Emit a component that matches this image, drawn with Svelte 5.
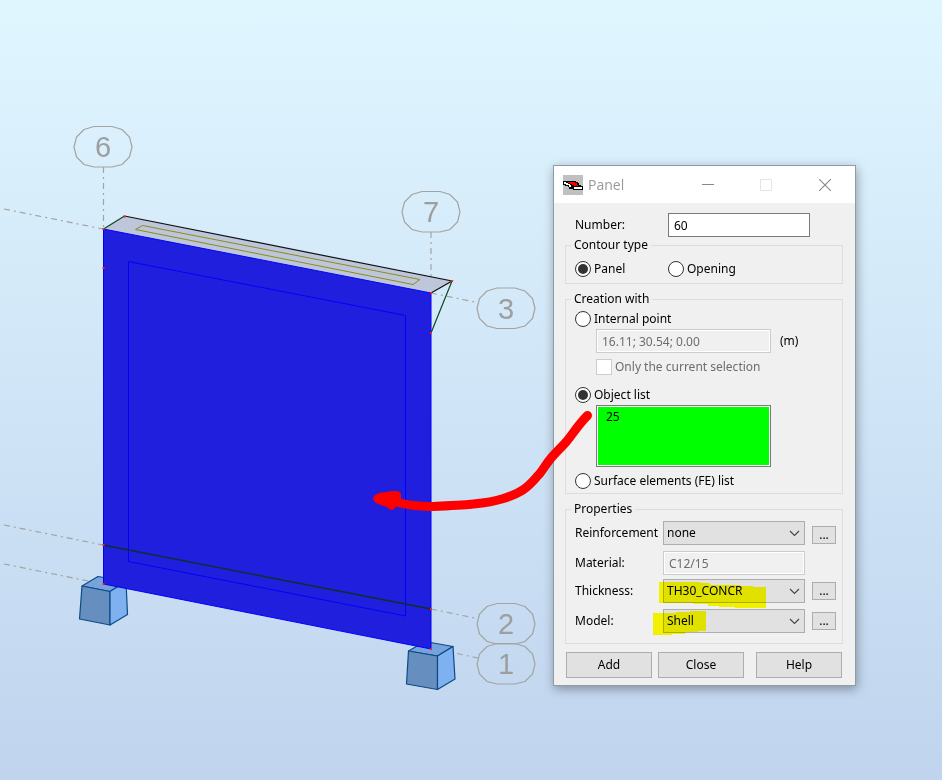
<script>
  const bubbles = [
    { label: '6', x: 103, y: 147 },
    { label: '7', x: 431, y: 212 },
    { label: '3', x: 506, y: 308.5 },
    { label: '2', x: 506, y: 624 },
    { label: '1', x: 506, y: 664 }
  ];
  const nodes = [
    [103.5, 229], [124.5, 216.5], [103.5, 268], [451.5, 281], [431, 293],
    [431, 333], [103.5, 545], [431, 609], [431, 649], [103.5, 584]
  ];
  let contour = $state('panel');
  let creation = $state('objects');
  let number = $state('60');
  let objects = $state('25');
</script>

{#snippet chevron()}
  <svg class="chevron" width="11" height="7" viewBox="0 0 11 7" aria-hidden="true">
    <path d="M1 1l4.5 4.5L10 1" fill="none" stroke="#444" stroke-width="1.1" />
  </svg>
{/snippet}

<main>
  <svg class="scene" width="942" height="780" viewBox="0 0 942 780" aria-label="Model view">
    <g stroke="#0b4a87" stroke-width="1.2" stroke-linejoin="round">
      <path fill="#76a3dc" d="M82 586L98 576.5L126 581.5L110 591.5Z" />
      <path fill="#668fc0" d="M82 586L110 591.5V625L79.5 619Z" />
      <path fill="#7fb1f0" d="M110 591.5L126 581.5L127.5 614.5L110 625Z" />
      <path fill="#76a3dc" d="M408.5 651L425 641.5L453 646.5L437.5 656Z" />
      <path fill="#668fc0" d="M408.5 651L437.5 656V689.5L406.5 684Z" />
      <path fill="#7fb1f0" d="M437.5 656L453 646.5L455 679L437.5 689.5Z" />
    </g>
    <path
      fill="none"
      stroke="#a3a3a3"
      stroke-width="1.2"
      stroke-dasharray="6 4 2 4"
      d="M103.5 167V229M431 232V288M4 209L103 229M431 293L477 302.5M4 525L103 545M431 609L477 618.5M4 564L103 584M457 653.5L478 658"
    />
    <path fill="#bdc6da" d="M103.5 229L124.5 216L452 281L431 293Z" />
    <path fill="none" stroke="#8c8c18" d="M135.5 229.5L142.5 225.5L420 279.5L413 284.5Z" />
    <path fill="#1f1fdd" stroke="#00f" d="M103.5 229L431 293V649L103.5 584Z" />
    <path fill="none" stroke="#00f" d="M128.5 261.5L405.5 315.5V616L128.5 561.5Z" />
    <path fill="none" stroke="#111" stroke-width="1.2" d="M124.5 216L452 281L431 293" />
    <path fill="none" stroke="#0b4a1c" stroke-width="1.2" d="M103.5 229L124.5 216M452 281L431 333" />
    <path stroke="#0a3226" stroke-width="1.3" d="M103 545L431 609" />
    {#each nodes as [x, y]}
      <rect x={x - 1} y={y - 1} width="2" height="2" fill="#f0202c" />
    {/each}
    {#each bubbles as b}
      <g transform="translate({b.x} {b.y})">
        <path
          fill="none"
          stroke="#a3a3a3"
          stroke-width="1.2"
          d="M-9 -20.5H9L19 -17.5L26.5 -10L29 0L26.5 10L19 17.5L9 20H-9L-19 17.5L-26.5 10L-29 0L-26.5 -10L-19 -17.5Z"
        />
        <text y="10" text-anchor="middle">{b.label}</text>
      </g>
    {/each}
  </svg>

  <form class="dialog" onsubmit={(e) => e.preventDefault()}>
    <header>
      <svg width="20" height="20" viewBox="0 0 20 20" aria-hidden="true">
        <rect width="20" height="20" fill="#c0c0c0" />
        <path d="M0 6H13V7H15V8H16V10H18V11H20V15H10V14H6V12H5V11H2V10H0Z" fill="#000" />
        <path d="M1 7H3V8H5V9H7V10H8V12H6V10H3V9H1Z" fill="#fff" />
        <path d="M5 7H12V8H14V10H15V11H11V10H9V9H7V8H5Z" fill="#f00" />
        <path d="M11 12H19V14H11Z" fill="#fff" />
      </svg>
      <h1>Panel</h1>
      <button type="button" aria-label="Minimize">
        <svg width="12" height="12" viewBox="0 0 12 12"><path d="M0 5.5H12" stroke="#888" /></svg>
      </button>
      <button type="button" aria-label="Maximize" disabled>
        <svg width="12" height="12" viewBox="0 0 12 12"><path d="M.5 .5H11.5V11.5H.5Z" fill="none" stroke="#e4e4e4" /></svg>
      </button>
      <button type="button" aria-label="Close window">
        <svg width="12" height="12" viewBox="0 0 12 12"><path d="M0 0L12 12M12 0L0 12" stroke="#888" stroke-width="1.1" /></svg>
      </button>
    </header>

    <div class="body">
      <div class="number">
        <label for="number">Number:</label>
        <input id="number" class="field" type="text" bind:value={number} />
      </div>

      <fieldset class="contour">
        <legend>Contour type</legend>
        <label class="choice"><input type="radio" name="contour" value="panel" bind:group={contour} />Panel</label>
        <label class="choice"><input type="radio" name="contour" value="opening" bind:group={contour} />Opening</label>
      </fieldset>

      <fieldset class="creation">
        <legend>Creation with</legend>
        <label class="choice"><input type="radio" name="creation" value="point" bind:group={creation} />Internal point</label>
        <div class="nested point">
          <input class="field" type="text" value="16.11; 30.54; 0.00" aria-label="Internal point coordinates" disabled />
          <span>(m)</span>
        </div>
        <label class="choice nested dim"><input type="checkbox" disabled />Only the current selection</label>
        <label class="choice objects"><input type="radio" name="creation" value="objects" bind:group={creation} />Object list</label>
        <textarea class="nested" aria-label="Object list" bind:value={objects}></textarea>
        <label class="choice surface"><input type="radio" name="creation" value="surface" bind:group={creation} />Surface elements (FE) list</label>
      </fieldset>

      <fieldset class="properties">
        <legend>Properties</legend>
        <div class="row first">
          <label for="reinforcement">Reinforcement</label>
          <span class="pick"><select id="reinforcement"><option>none</option></select>{@render chevron()}</span>
          <button type="button" class="more" aria-label="Edit reinforcement">...</button>
        </div>
        <div class="row">
          <label for="material">Material:</label>
          <input id="material" class="field" type="text" value="C12/15" disabled />
        </div>
        <div class="row tight">
          <label for="thickness">Thickness:</label>
          <span class="pick"><select id="thickness"><option>TH30_CONCR</option></select>{@render chevron()}</span>
          <button type="button" class="more" aria-label="Edit thickness">...</button>
        </div>
        <div class="row">
          <label for="model">Model:</label>
          <span class="pick"><select id="model"><option>Shell</option></select>{@render chevron()}</span>
          <button type="button" class="more" aria-label="Edit model">...</button>
        </div>
      </fieldset>

      <footer>
        <button type="submit">Add</button>
        <button type="button">Close</button>
        <button type="button" class="help">Help</button>
      </footer>
    </div>
  </form>

  <svg class="marks highlight" width="942" height="780" viewBox="0 0 942 780" aria-hidden="true">
    <path fill="#ff0" d="M659 582H700L701 583H709L710 585H740V586H753V587H766V608H735V607H719V606H708V604H693V603H659Z" />
    <path fill="#ff0" d="M653 613H676V612H690V611H706V631H698V632H685V634H672V635H653Z" />
  </svg>
  <svg class="marks" width="942" height="780" viewBox="0 0 942 780" aria-hidden="true">
    <path
      fill="none"
      stroke="#f00"
      stroke-width="9"
      stroke-linecap="round"
      stroke-linejoin="round"
      d="M587.5 415.5C577 426 573 434 566.5 441.5C561 448 557 451 551.5 457.5C546 464 543 470 538.5 475C533 481 530 485 523.5 489.5C517 494 511 496 503.5 498.5C494 501.5 484 503 473.5 504C460 505.5 444 506 430 506.5C416 506.5 407 505 396 502"
    />
    <path
      fill="#f00"
      d="M373 498.5Q373.5 495 378 493.5Q385 491.5 396 491Q401 491.5 401 495V500Q400 503 396.5 506Q394 510 391.5 510Q389 509 387 507Q380 505 376 503Q373 501 373 498.5Z"
    />
  </svg>
</main>

<style>
  :global(body) {
    margin: 0;
  }

  main {
    position: relative;
    min-height: 100vh;
    overflow: hidden;
    background: linear-gradient(#e0f6ff, #c0d4ee);
    color: #000;
    font: 12px/16px 'Noto Sans', sans-serif;
  }

  .scene,
  .marks {
    position: absolute;
    top: 0;
    left: 0;
  }

  .marks {
    pointer-events: none;
  }

  .highlight {
    mix-blend-mode: multiply;
  }

  .scene text {
    fill: #9e9e9e;
    font: 29px 'Liberation Sans', sans-serif;
  }

  .dialog {
    position: absolute;
    top: 165px;
    left: 553px;
    width: 301px;
    border: 1px solid #8f9ba6;
    background: #f0f0f0;
    box-shadow: 1px 3px 10px rgb(0 0 0 / 35%);
  }

  header {
    display: flex;
    align-items: center;
    height: 37px;
    padding: 0 0 0 9px;
    background: #fff;
  }

  h1 {
    flex: 1;
    margin: 0 0 0 5px;
    color: #999;
    font: 14px/20px 'Open Sans', 'Noto Sans', sans-serif;
  }

  header button {
    display: grid;
    place-items: center;
    width: 58px;
    height: 36px;
    padding: 0;
    border: 0;
    background: none;
  }

  header button:last-child {
    width: 60px;
  }

  .body {
    padding: 10px 12px 7px 11px;
  }

  input,
  textarea,
  select,
  button {
    box-sizing: border-box;
    margin: 0;
    border-radius: 0;
    color: inherit;
    font: inherit;
  }

  .number {
    display: grid;
    grid-template-columns: 93px 142px;
    align-items: center;
    padding-left: 10px;
  }

  .field {
    width: 100%;
    height: 24px;
    padding: 0 5px;
    border: 1px solid #7a7a7a;
    background: #fff;
  }

  .field:disabled {
    border-color: #ccc;
    background: #f0f0f0;
    box-shadow: inset 0 0 0 1px #fff;
    color: #6d6d6d;
  }

  fieldset {
    min-width: 0;
    margin: 0;
    padding: 0 6px 0 9px;
    border: 1px solid #dcdcdc;
  }

  legend {
    margin-left: -4px;
    padding: 0 3px;
  }

  .contour {
    display: grid;
    grid-template-columns: 93px 1fr;
    padding-top: 8px;
    padding-bottom: 6px;
  }

  .creation {
    margin-top: 7px;
    padding-top: 4px;
    padding-bottom: 4px;
  }

  .properties {
    margin-top: 7px;
    padding-top: 4px;
    padding-bottom: 10px;
  }

  .choice {
    display: flex;
    align-items: center;
    gap: 3px;
  }

  .choice input {
    display: grid;
    place-items: center;
    width: 16px;
    height: 16px;
    border: 1px solid #333;
    background: #fff;
    appearance: none;
  }

  .choice input[type='radio'] {
    border-radius: 50%;
  }

  input[type='radio']:checked::before {
    width: 10px;
    height: 10px;
    border-radius: 50%;
    background: #333;
    content: '';
  }

  .choice input[type='checkbox'] {
    border-color: #ccc;
  }

  .nested {
    margin-left: 21px;
  }

  .point {
    display: flex;
    align-items: center;
    gap: 9px;
    margin-top: 2px;
    margin-bottom: 6px;
  }

  .point .field {
    width: 175px;
  }

  .dim {
    color: #6d6d6d;
  }

  .objects {
    margin-top: 12px;
  }

  textarea {
    display: block;
    width: 175px;
    height: 62px;
    margin-top: 2px;
    padding: 3px 9px;
    border: 1px solid #7a7a7a;
    background: #0f0;
    box-shadow: inset 0 0 0 1px #fff;
    resize: none;
  }

  .surface {
    margin-top: 6px;
  }

  .row {
    display: grid;
    grid-template-columns: 88px 142px 24px;
    align-items: center;
    margin-top: 6px;
  }

  .row.first {
    margin-top: 0;
  }

  .row.tight {
    margin-top: 4px;
  }

  .row .more {
    margin-left: 7px;
  }

  .row.first .more {
    margin-top: 4px;
  }

  .row label {
    overflow: hidden;
    white-space: nowrap;
  }

  .pick {
    position: relative;
    display: block;
  }

  select {
    display: block;
    width: 100%;
    height: 24px;
    padding: 0 20px 0 3px;
    border: 1px solid #adadad;
    background: #e1e1e1;
    appearance: none;
  }

  .chevron {
    position: absolute;
    top: 9px;
    right: 5px;
    pointer-events: none;
  }

  .more,
  footer button {
    border: 1px solid #adadad;
    background: #e1e1e1;
  }

  .more {
    width: 24px;
    height: 18px;
    padding: 0;
  }

  footer {
    display: flex;
    gap: 6px;
    margin: 8px 0 0 1px;
  }

  footer button {
    width: 86px;
    height: 26px;
    padding: 0;
  }

  .help {
    margin-left: 6px;
  }
</style>
